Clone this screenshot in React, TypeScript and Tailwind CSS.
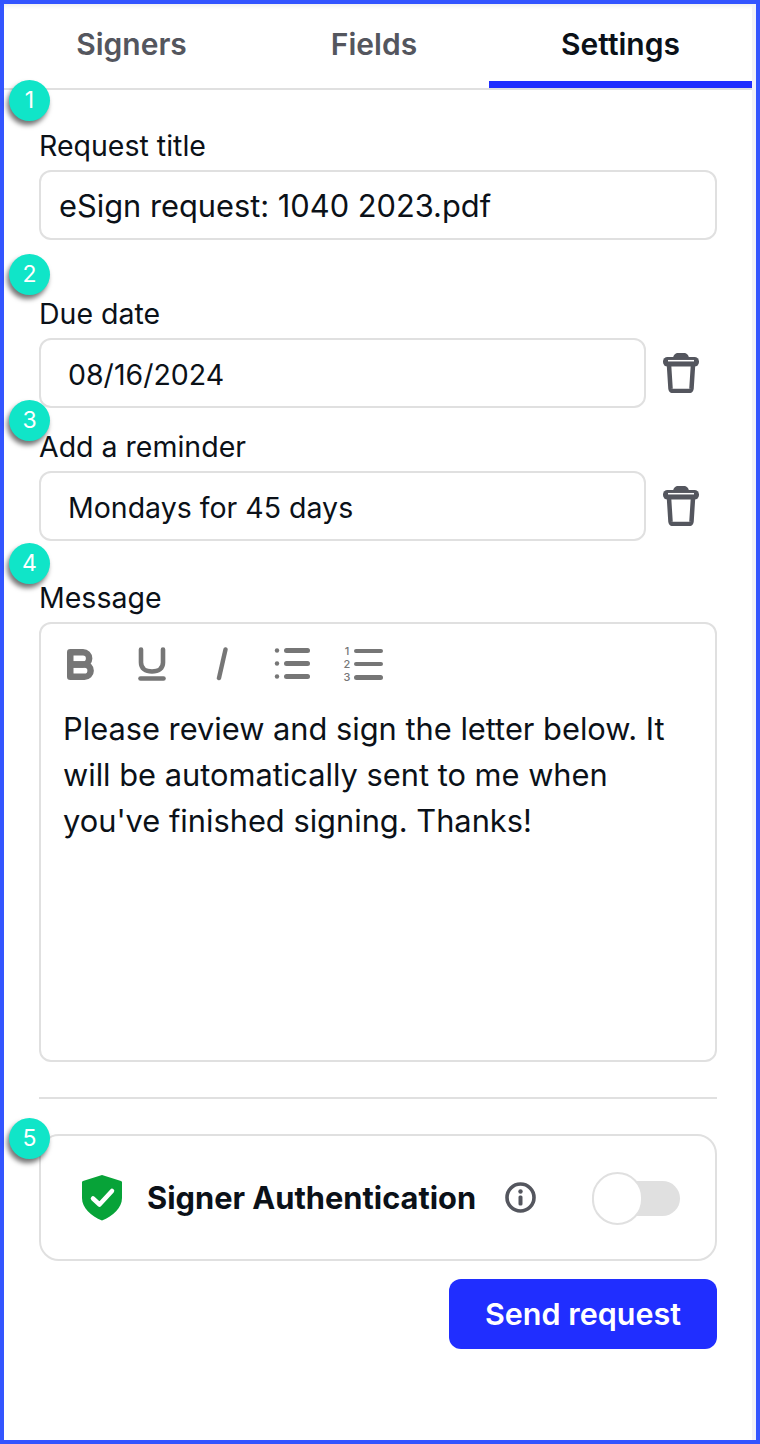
function Badge({ n, className }: { n: number; className: string }) {
  return (
    <span
      className={`absolute flex h-[41px] w-[41px] items-center justify-center rounded-full bg-[#10e5c8] text-[23px] leading-none text-white shadow-[-2px_4px_5px_rgba(0,0,0,0.55)] ${className}`}
    >
      {n}
    </span>
  );
}

function Trash() {
  return (
    <svg width="36" height="40" viewBox="0 0 36 40" fill="none" className="shrink-0">
      <path d="M10 6c0-3.500 2-6 5-6h6c3 0 5 2.500 5 6z" fill="#54565e" />
      <rect x="0" y="4" width="36" height="9.500" rx="4.500" fill="#54565e" />
      <path d="M6 12l1.500 23.500c.2 1.800 1.300 2.500 3 2.500h15c1.700 0 2.800-.7 3-2.500L30 12" stroke="#54565e" strokeWidth="4.500" strokeLinejoin="round" />
      <path d="M5 7.700h26" stroke="#fff" strokeWidth="1.500" />
    </svg>
  );
}

function Input({ value, pad, size }: { value: string; pad: string; size: string }) {
  return (
    <div className={`flex h-[70px] min-w-0 flex-1 items-center rounded-[12px] border-2 border-[#e0e0e0] text-[#0b1118] ${pad} ${size}`}>
      {value}
    </div>
  );
}

function BoldIcon() {
  return (
    <svg width="27" height="31" viewBox="0 0 27 31" fill="none" stroke="#767676" strokeWidth="6.500" strokeLinejoin="round">
      <path d="M3.250 3.250H16a6.100 6.100 0 0 1 0 12.250H3.250z" />
      <path d="M3.250 15.500H17.500a6.100 6.100 0 0 1 0 12.250H3.250z" />
    </svg>
  );
}

function UnderlineIcon() {
  return (
    <svg width="28" height="34" viewBox="0 0 28 34" fill="none" stroke="#767676" strokeWidth="4.600" strokeLinecap="round">
      <path d="M3 2.500v13C3 21.500 7.500 24.500 14 24.500s11-3 11-9V2.500" />
      <path d="M2.500 31.500h23" />
    </svg>
  );
}

function ItalicIcon() {
  return (
    <svg width="12" height="34" viewBox="0 0 12 34" fill="none" stroke="#767676" strokeWidth="4.400" strokeLinecap="round">
      <path d="M9.500 2.500L3 31" />
    </svg>
  );
}

function BulletList() {
  return (
    <svg width="38" height="34" viewBox="0 0 38 34" fill="#767676">
      <circle cx="3" cy="3.500" r="2.200" />
      <circle cx="3" cy="16.500" r="2.200" />
      <circle cx="3" cy="29.500" r="2.200" />
      <rect x="10" y="1" width="26" height="5" rx="2.500" />
      <rect x="10" y="14" width="26" height="5" rx="2.500" />
      <rect x="10" y="27" width="26" height="5" rx="2.500" />
    </svg>
  );
}

function NumberList() {
  return (
    <div className="flex h-[39px] items-stretch gap-[2px]">
      <div className="flex w-[10px] flex-col items-center text-[11px] leading-[13px] font-medium text-[#767676]">
        <span>1</span>
        <span>2</span>
        <span>3</span>
      </div>
      <div className="flex w-[29px] flex-col justify-between py-[4px]">
        <div className="h-[4.500px] rounded-full bg-[#767676]" />
        <div className="h-[4.500px] rounded-full bg-[#767676]" />
        <div className="h-[4.500px] rounded-full bg-[#767676]" />
      </div>
    </div>
  );
}

function InfoIcon() {
  return (
    <svg width="31" height="31" viewBox="0 0 31 31" fill="none" className="ml-[29px] shrink-0">
      <circle cx="15.500" cy="15.500" r="13.500" stroke="#54565e" strokeWidth="3.600" />
      <circle cx="15.500" cy="9.500" r="2.200" fill="#54565e" />
      <rect x="13.500" y="13.500" width="4" height="10" rx="1.500" fill="#54565e" />
    </svg>
  );
}

export default function App() {
  return (
    <div className="h-[1444px] w-[760px] border-4 border-[#3355ff] bg-white font-['Inter',sans-serif] text-[#0b1118]">
      <div className="h-full border-r-4 border-[#f1f1f8] shadow-[inset_0_5px_4px_-3px_rgba(0,0,0,0.07)]">
        {/* Tabs */}
        <div className="flex h-[86px] border-b-2 border-[#e0e0e0] text-[30px] font-semibold text-[#54565e]">
          <div className="flex w-[255px] items-center justify-center pb-[4px]">Signers</div>
          <div className="flex w-[230px] items-center justify-center pb-[4px]">Fields</div>
          <div className="flex flex-1 items-center justify-center border-b-[7px] border-[#202eff] pt-[3px] text-[#0b1118]">Settings</div>
        </div>

        <div className="pl-[35px] pr-[35px] pt-[40px]">
          <div className="relative">
            <Badge n={1} className="-left-[30px] -top-[50px]" />
            <div className="mb-[8px] h-[32px] text-[28.500px] leading-[32px]">Request title</div>
            <Input value="eSign request: 1040 2023.pdf" pad="pl-[18px] pt-[2px]" size="text-[30.800px]" />
          </div>

          <div className="relative mt-[58px]">
            <Badge n={2} className="-left-[30px] -top-[44px]" />
            <div className="mb-[8px] h-[32px] text-[28.500px] leading-[32px]">Due date</div>
            <div className="flex items-center">
              <Input value="08/16/2024" pad="pl-[27px] pt-[4px]" size="text-[28.500px]" />
              <div className="flex w-[71px] pl-[17px]"><Trash /></div>
            </div>
          </div>

          <div className="relative mt-[23px]">
            <Badge n={3} className="-left-[30px] -top-[31px]" />
            <div className="mb-[8px] h-[32px] text-[28.500px] leading-[32px]">Add a reminder</div>
            <div className="flex items-center">
              <Input value="Mondays for 45 days" pad="pl-[27px] pt-[4px]" size="text-[28.500px]" />
              <div className="flex w-[71px] pl-[17px]"><Trash /></div>
            </div>
          </div>

          <div className="relative mt-[41px]">
            <Badge n={4} className="-left-[30px] -top-[39px]" />
            <div className="mb-[8px] h-[32px] text-[28.500px] leading-[32px]">Message</div>
            <div className="h-[440px] rounded-[12px] border-2 border-[#e0e0e0] pl-[23px] pr-[20px] pt-[20px]">
              <div className="flex h-[40px] items-center">
                <div className="ml-[3px]"><BoldIcon /></div>
                <div className="ml-[44px]"><UnderlineIcon /></div>
                <div className="ml-[50px]"><ItalicIcon /></div>
                <div className="ml-[46px]"><BulletList /></div>
                <div className="ml-[30px]"><NumberList /></div>
              </div>
              <p className="-ml-[1px] mt-[22px] text-[30.800px] leading-[46px]">
                Please review and sign the letter below. It will be automatically sent to me when you've finished signing. Thanks!
              </p>
            </div>
          </div>

          <div className="mt-[35px] h-[2px] bg-[#e0e0e0]" />

          <div className="relative mt-[35px] flex h-[127px] items-center rounded-[20px] border-2 border-[#e0e0e0] pl-[41px]">
            <Badge n={5} className="-left-[32px] -top-[18px]" />
            <svg width="40" height="46" viewBox="0 0 40 46" className="shrink-0">
              <path d="M20 0 L39 6 a1.500 1.500 0 0 1 1 1.500 V23 C40 33 31 41 20 45.500 C9 41 0 33 0 23 V7.500 a1.500 1.500 0 0 1 1-1.500z" fill="#07a338" />
              <path d="M11 23.500l6.500 6L30 16" stroke="#fff" strokeWidth="4.500" strokeLinecap="round" strokeLinejoin="round" fill="none" />
            </svg>
            <span className="ml-[25px] pt-[1px] text-[30.800px] font-bold">Signer Authentication</span>
            <InfoIcon />
            <div className="relative ml-[56px] mt-[2px] h-[35px] w-[88px] rounded-full bg-[#e0e0e0]">
              <div className="absolute -top-[9px] left-0 h-[53px] w-[51px] rounded-full border-2 border-[#e0e0e0] bg-white" />
            </div>
          </div>

          <div className="mt-[18px] flex justify-end">
            <div className="flex h-[70px] w-[268px] items-center justify-center rounded-[12px] bg-[#202eff] text-[30.500px] font-semibold text-white">
              Send request
            </div>
          </div>
        </div>
      </div>
    </div>
  );
}
